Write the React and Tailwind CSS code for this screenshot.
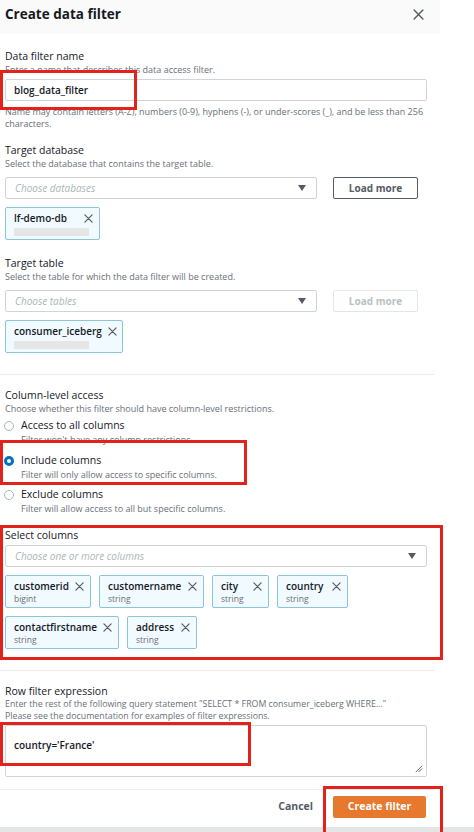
import React from "react";

const F = { fontFamily: '"Open Sans", "Noto Sans", sans-serif' };

function XIcon({ className = "" }) {
  return (
    <svg viewBox="0 0 10 10" className={"shrink-0 " + className} fill="none" stroke="currentColor" strokeWidth="1.3" strokeLinecap="round">
      <path d="M1 1 L9 9 M9 1 L1 9" />
    </svg>
  );
}

function Caret() {
  return (
    <svg viewBox="0 0 8 6" className="w-[8px] h-[6px] shrink-0" fill="#545b64">
      <path d="M0 0 H8 L4 6 Z" />
    </svg>
  );
}

function Label({ children, className = "" }) {
  return <div className={"text-[10.5px] leading-[14px] text-[#16191f] " + className}>{children}</div>;
}
function Desc({ children, className = "" }) {
  return <div className={"text-[9px] leading-[12px] text-[#687078] " + className}>{children}</div>;
}

function Select({ placeholder, className = "" }) {
  return (
    <div className={"h-[22px] border border-[#cfd5d6] rounded-[2px] flex items-center justify-between pl-[9px] pr-[10px] " + className}>
      <span className="italic text-[10px] text-[#aab7b8]">{placeholder}</span>
      <Caret />
    </div>
  );
}

function Token({ name, sub, bar, className = "" }) {
  return (
    <div className={"h-[33px] border border-[#8cc4de] bg-[#f1faff] rounded-[2px] pl-[8px] pr-[6px] pt-[4px] flex flex-col " + className}>
      <div className="flex items-center justify-between gap-[6px]">
        <span className="text-[10px] leading-[13px] font-semibold text-[#16191f] whitespace-nowrap">{name}</span>
        <XIcon className="w-[9px] h-[9px] text-[#545b64]" />
      </div>
      {bar ? (
        <div className="mt-[3px] h-[8px] w-[75px] bg-[#e6e6e6]" />
      ) : (
        <div className="text-[8.5px] leading-[12px] text-[#687078]">{sub}</div>
      )}
    </div>
  );
}

function Radio({ checked, label, desc, className = "" }) {
  return (
    <div className={"flex " + className}>
      <div className="w-[17px] shrink-0 pt-[2.5px] -ml-[1px]">
        {checked ? (
          <div className="w-[10px] h-[10px] rounded-full border-[3px] border-[#0073bb] bg-white" />
        ) : (
          <div className="w-[10px] h-[10px] rounded-full border border-[#aab7b8] bg-white" />
        )}
      </div>
      <div>
        <div className="text-[10.5px] leading-[14px] text-[#16191f]">{label}</div>
        <div className="text-[9px] leading-[12px] text-[#687078] mt-[2px]">{desc}</div>
      </div>
    </div>
  );
}

function Divider({ className = "" }) {
  return <div className={"h-px w-[434px] -ml-[5px] bg-[#eaeded] " + className} />;
}

export default function App() {
  return (
    <div style={F} className="relative w-[474px] h-[832px] bg-white overflow-hidden">
      {/* Header */}
      <div className="h-[34px] w-[440px] bg-[#fafafa] flex items-start justify-between pl-[5px] pr-[16px] pt-[4px]">
        <div className="text-[13.5px] leading-[20px] font-bold text-[#16191f]">Create data filter</div>
        <XIcon className="w-[11px] h-[11px] mt-[5px] text-[#545b64]" />
      </div>

      <div className="pl-[5px] w-[427px]">
        {/* Data filter name */}
        <Label className="mt-[15px]">Data filter name</Label>
        <Desc className="mt-[1px]">Enter a name that describes this data access filter.</Desc>
        <div className="mt-[3px] h-[22px] border border-[#cfd5d6] rounded-[2px] flex items-center pl-[8px]">
          <span className="text-[10px] font-semibold text-[#16191f]">blog_data_filter</span>
        </div>
        <Desc className="mt-[5px]">
          Name may contain letters (A-Z), numbers (0-9), hyphens (-), or under-scores (_), and be less than 256 characters.
        </Desc>

        {/* Target database */}
        <Label className="mt-[13px]">Target database</Label>
        <Desc className="mt-[1px]">Select the database that contains the target table.</Desc>
        <div className="mt-[7px] flex gap-[16px]">
          <Select placeholder="Choose databases" className="w-[312px]" />
          <div className="w-[85px] h-[22px] border border-[#545b64] rounded-[2px] flex items-center justify-center text-[10px] font-bold text-[#545b64]">
            Load more
          </div>
        </div>
        <div className="mt-[8px] flex">
          <Token name="lf-demo-db" bar className="w-[95px]" />
        </div>

        {/* Target table */}
        <Label className="mt-[16px]">Target table</Label>
        <Desc className="mt-[1px]">Select the table for which the data filter will be created.</Desc>
        <div className="mt-[7px] flex gap-[16px]">
          <Select placeholder="Choose tables" className="w-[312px]" />
          <div className="w-[85px] h-[22px] border border-[#e3e6e6] rounded-[2px] flex items-center justify-center text-[10px] font-bold text-[#b8c2c2]">
            Load more
          </div>
        </div>
        <div className="mt-[8px] flex">
          <Token name="consumer_iceberg" bar className="w-[118px]" />
        </div>

        <Divider className="mt-[21px]" />

        {/* Column-level access */}
        <Label className="mt-[13px]">Column-level access</Label>
        <Desc className="mt-[1px]">Choose whether this filter should have column-level restrictions.</Desc>
        <Radio className="mt-[3px]" label="Access to all columns" desc="Filter won't have any column restrictions." />
        <Radio className="mt-[7px]" checked label="Include columns" desc="Filter will only allow access to specific columns." />
        <Radio className="mt-[6px]" label="Exclude columns" desc="Filter will allow access to all but specific columns." />

        {/* Select columns */}
        <Label className="mt-[13px]">Select columns</Label>
        <Select placeholder="Choose one or more columns" className="mt-[3px] w-full" />
        <div className="mt-[8px] flex flex-wrap gap-x-[8px] gap-y-[8px] w-[360px]">
          <Token name="customerid" sub="bigint" className="w-[86px]" />
          <Token name="customername" sub="string" className="w-[105px]" />
          <Token name="city" sub="string" className="w-[57px]" />
          <Token name="country" sub="string" className="w-[71px]" />
          <Token name="contactfirstname" sub="string" className="w-[114px]" />
          <Token name="address" sub="string" className="w-[70px]" />
        </div>

        <Divider className="mt-[21px]" />

        {/* Row filter expression */}
        <Label className="mt-[13px]">Row filter expression</Label>
        <div className="mt-[1px] text-[8.8px] leading-[11.5px] text-[#687078]">
          Enter the rest of the following query statement "SELECT * FROM consumer_iceberg WHERE..."
          <br />
          Please see the documentation for examples of filter expressions.
        </div>
        <div className="relative mt-[3px] h-[52px] border border-[#cfd5d6] rounded-[2px] pl-[8px] pt-[5px]">
          <span className="text-[10px] font-semibold text-[#16191f]">country='France'</span>
          <svg viewBox="0 0 10 10" className="absolute right-[3px] bottom-[3px] w-[9px] h-[9px]" stroke="#545b64" strokeWidth="1">
            <path d="M2 9 L9 2 M5 9 L9 5" />
          </svg>
        </div>

        <Divider className="mt-[12px]" />

        {/* Footer */}
        <div className="mt-[6px] flex justify-end items-center gap-[20px] pr-[1px]">
          <span className="text-[10.5px] font-bold text-[#545b64]">Cancel</span>
          <div className="w-[93px] h-[22px] bg-[#e6792e] rounded-[2px] flex items-center justify-center text-[10.5px] font-bold text-white">
            Create filter
          </div>
        </div>
      </div>

      <div className="absolute left-0 right-0 bottom-0 h-[5px] bg-[#e3e5e7]" />

      {/* Red annotation boxes */}
      <div className="absolute left-0 top-[70px] w-[137px] h-[40px] border-[3px] border-[#e3231b]" />
      <div className="absolute left-0 top-[440px] w-[247px] h-[45px] border-[3px] border-[#e3231b]" />
      <div className="absolute left-0 top-[525px] w-[443px] h-[135px] border-[3px] border-[#e3231b]" />
      <div className="absolute left-0 top-[722px] w-[251px] h-[44px] border-[3px] border-[#e3231b]" />
      <div className="absolute left-[323px] top-[786px] w-[120px] h-[50px] border-[3px] border-[#e3231b]" />
    </div>
  );
}
